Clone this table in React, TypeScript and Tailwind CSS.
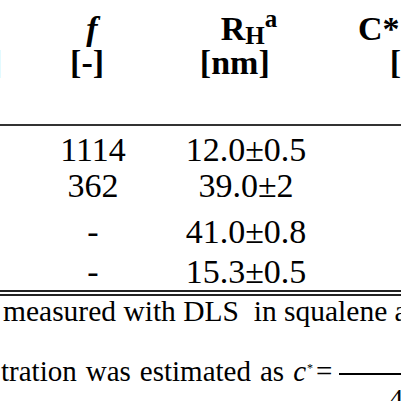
export default function App() {
  return (
    <div className="h-[401px] w-[401px] overflow-hidden bg-white font-['Liberation_Serif',serif] text-black">
      {/* header */}
      <div className="pt-[12px] text-[34px] font-bold">
        <div className="flex h-[34px] leading-[34px]">
          <div className="w-[32px]" />
          <div className="w-[120px] text-center italic">f</div>
          <div className="w-[194px] whitespace-nowrap text-center">
            R<sub className="relative top-[4px] align-baseline text-[25px]">H</sub>
            <sup className="relative -top-[13px] align-baseline text-[25px]">a</sup>
          </div>
          <div className="whitespace-nowrap pl-[12px]">C*</div>
        </div>
        <div className="flex h-[34px] leading-[34px]">
          <div className="w-[32px] whitespace-nowrap">
            <span className="-ml-[9px] text-[#666]">]</span>
          </div>
          <div className="w-[120px] text-center">[-]</div>
          <div className="w-[192px] text-center">[nm]</div>
          <div className="whitespace-nowrap pl-[64px]">[</div>
        </div>
      </div>

      <div className="mt-[44px] h-[2px] bg-[#333]" />

      {/* body */}
      <div className="mt-[6px] text-[34px] leading-[36px]">
        {[
          { f: "1114", rh: "12.0±0.5", h: "h-[36px]" },
          { f: "362", rh: "39.0±2", h: "h-[46px]" },
          { f: "-", rh: "41.0±0.8", h: "h-[40px]" },
          { f: "-", rh: "15.3±0.5", h: "h-[36px]" },
        ].map((row, i) => (
          <div key={i} className={`flex ${row.h}`}>
            <div className="w-[32px]" />
            <div className="w-[122px] text-center">{row.f}</div>
            <div className="w-[184px] text-center">{row.rh}</div>
          </div>
        ))}
      </div>

      <div className="h-[2px] bg-[#222]" />
      <div className="mt-[2px] h-[2px] bg-[#222]" />

      {/* footnotes */}
      <div className="whitespace-pre pl-[3px] text-[29.5px] leading-[30px]">
        measured with DLS  in squalene at 25 °C
      </div>
      <div className="mt-[30px] flex items-start whitespace-nowrap pl-[1px] text-[29px] leading-[30px]">
        <span>tration</span>
        <span className="ml-[9px]">was</span>
        <span className="ml-[9px]">estimated</span>
        <span className="ml-[9px]">as</span>
        <span className="ml-[9px] italic">
          c<sup className="relative -top-[9px] ml-[1px] align-baseline text-[12px] not-italic">*</sup>
        </span>
        <span className="ml-[3px]">=</span>
        <span className="ml-[7px] flex flex-col">
          <span className="h-[17px]" />
          <span className="h-[2px] w-[80px] bg-black" />
          <span className="mt-[10px] pl-[50px] text-[28px] leading-[28px]">4</span>
        </span>
      </div>
    </div>
  );
}
